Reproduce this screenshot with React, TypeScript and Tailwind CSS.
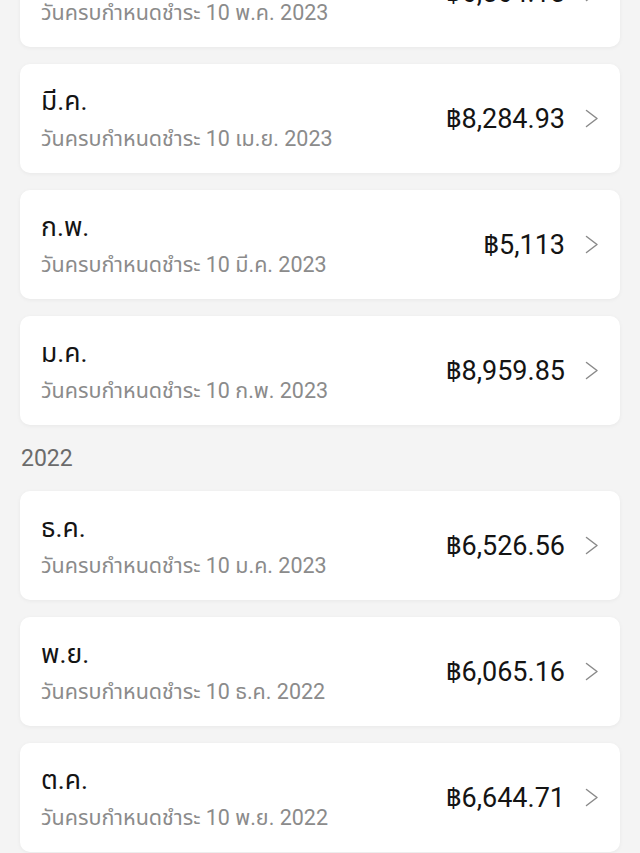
type Bill = {
  month: string
  due: string
  amount: string
}

const group2023: Bill[] = [
  { month: "เม.ย.", due: "วันครบกำหนดชำระ 10 พ.ค. 2023", amount: "฿6,564.15" },
  { month: "มี.ค.", due: "วันครบกำหนดชำระ 10 เม.ย. 2023", amount: "฿8,284.93" },
  { month: "ก.พ.", due: "วันครบกำหนดชำระ 10 มี.ค. 2023", amount: "฿5,113" },
  { month: "ม.ค.", due: "วันครบกำหนดชำระ 10 ก.พ. 2023", amount: "฿8,959.85" },
]

const group2022: Bill[] = [
  { month: "ธ.ค.", due: "วันครบกำหนดชำระ 10 ม.ค. 2023", amount: "฿6,526.56" },
  { month: "พ.ย.", due: "วันครบกำหนดชำระ 10 ธ.ค. 2022", amount: "฿6,065.16" },
  { month: "ต.ค.", due: "วันครบกำหนดชำระ 10 พ.ย. 2022", amount: "฿6,644.71" },
]

function Chevron() {
  return (
    <svg width="14" height="19" viewBox="0 0 14 19" fill="none" className="shrink-0">
      <path d="M1.5 1.5L12 9.5L1.5 17.5" stroke="#8a8a8a" strokeWidth="1.5" strokeLinecap="round" strokeLinejoin="round" />
    </svg>
  )
}

function BillCard({ bill }: { bill: Bill }) {
  return (
    <div className="flex h-[109px] items-center justify-between rounded-[10px] bg-white pl-[21px] pr-[21px] shadow-[0_1px_4px_rgba(0,0,0,0.05)]">
      <div className="flex flex-col">
        <span className="text-[26.5px] leading-[32px] text-[#141414]">{bill.month}</span>
        <span className="mt-[9px] text-[21.5px] leading-[26px] text-[#8b8b8b]">{bill.due}</span>
      </div>
      <div className="flex items-center gap-[20px]">
        <span className="text-[27px] leading-[32px] text-[#141414]">{bill.amount}</span>
        <Chevron />
      </div>
    </div>
  )
}

export default function App() {
  return (
    <div
      className="h-[853px] overflow-hidden bg-[#f4f4f4]"
      style={{ fontFamily: "Roboto, 'Noto Sans', 'Noto Sans Thai', sans-serif" }}
    >
      <div className="mt-[-62px] flex flex-col gap-[17px] px-[20px]">
        {group2023.map((b) => (
          <BillCard key={b.month} bill={b} />
        ))}
        <div className="pl-[1px] pt-[2px] text-[23px] leading-[30px] text-[#6b6b6b]">2022</div>
        {group2022.map((b) => (
          <BillCard key={b.month} bill={b} />
        ))}
      </div>
    </div>
  )
}
